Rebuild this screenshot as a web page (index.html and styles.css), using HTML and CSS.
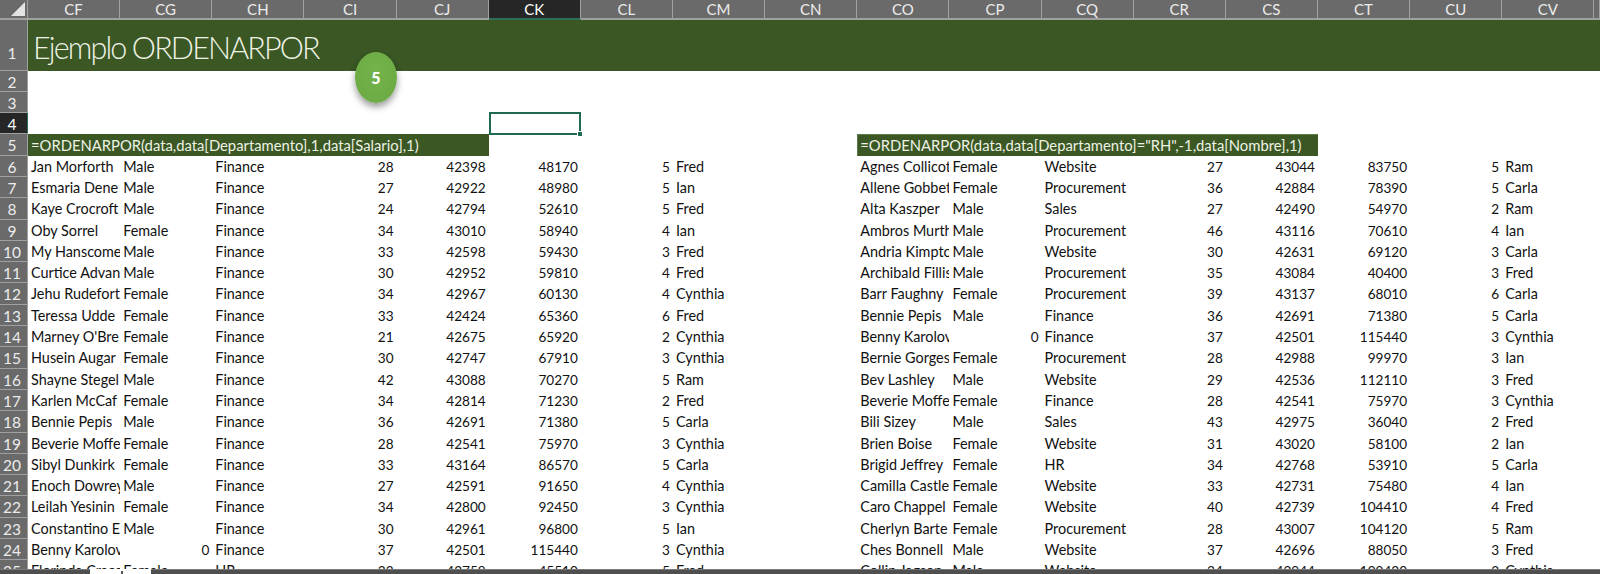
FILE: index.html
```html
<!DOCTYPE html>
<html lang="es">
<head>
    <meta charset="UTF-8">
    <meta name="viewport" content="width=device-width, initial-scale=1.0">
    <title>Ejemplo ORDENARPOR</title>
    <link rel="stylesheet" href="styles.css">
</head>
<body>
    <div class="window">
        <div class="sheet">
            <div class="row head-row">
                <span class="corner"><i class="corner-mark"></i></span>
                <span class="ch">CF</span><span class="ch">CG</span><span class="ch">CH</span><span class="ch">CI</span><span class="ch">CJ</span><span class="ch selected">CK</span><span class="ch">CL</span><span class="ch">CM</span><span class="ch">CN</span><span class="ch">CO</span><span class="ch">CP</span><span class="ch">CQ</span><span class="ch">CR</span><span class="ch">CS</span><span class="ch">CT</span><span class="ch">CU</span><span class="ch">CV</span><span class="ch"></span>
            </div>

            <div class="row title-row">
                <span class="rh">1</span>
                <div class="title">Ejemplo ORDENARPOR</div>
            </div>
            <div class="row"><span class="rh">2</span></div>
            <div class="row"><span class="rh">3</span></div>
            <div class="row">
                <span class="rh selected">4</span>
                <span class="c"></span><span class="c"></span><span class="c"></span><span class="c"></span><span class="c"></span>
                <span class="c active"><i class="handle"></i></span>
            </div>
            <div class="row">
                <span class="rh">5</span>
                <div class="formula left-formula">=ORDENARPOR(data,data[Departamento],1,data[Salario],1)</div>
                <div class="formula right-formula">=ORDENARPOR(data,data[Departamento]="RH",-1,data[Nombre],1)</div>
            </div>

            <div class="row"><span class="rh">6</span><span class="c">Jan Morforth</span><span class="c">Male</span><span class="c">Finance</span><span class="c n">28</span><span class="c n">42398</span><span class="c n">48170</span><span class="c n">5</span><span class="c">Fred</span><span class="c"></span><span class="c">Agnes Collicott</span><span class="c">Female</span><span class="c">Website</span><span class="c n">27</span><span class="c n">43044</span><span class="c n">83750</span><span class="c n">5</span><span class="c">Ram</span></div>
            <div class="row"><span class="rh">7</span><span class="c">Esmaria Dene</span><span class="c">Male</span><span class="c">Finance</span><span class="c n">27</span><span class="c n">42922</span><span class="c n">48980</span><span class="c n">5</span><span class="c">Ian</span><span class="c"></span><span class="c">Allene Gobbet</span><span class="c">Female</span><span class="c">Procurement</span><span class="c n">36</span><span class="c n">42884</span><span class="c n">78390</span><span class="c n">5</span><span class="c">Carla</span></div>
            <div class="row"><span class="rh">8</span><span class="c">Kaye Crocroft</span><span class="c">Male</span><span class="c">Finance</span><span class="c n">24</span><span class="c n">42794</span><span class="c n">52610</span><span class="c n">5</span><span class="c">Fred</span><span class="c"></span><span class="c">Alta Kaszper</span><span class="c">Male</span><span class="c">Sales</span><span class="c n">27</span><span class="c n">42490</span><span class="c n">54970</span><span class="c n">2</span><span class="c">Ram</span></div>
            <div class="row"><span class="rh">9</span><span class="c">Oby Sorrel</span><span class="c">Female</span><span class="c">Finance</span><span class="c n">34</span><span class="c n">43010</span><span class="c n">58940</span><span class="c n">4</span><span class="c">Ian</span><span class="c"></span><span class="c">Ambros Murth</span><span class="c">Male</span><span class="c">Procurement</span><span class="c n">46</span><span class="c n">43116</span><span class="c n">70610</span><span class="c n">4</span><span class="c">Ian</span></div>
            <div class="row"><span class="rh">10</span><span class="c">My Hanscome</span><span class="c">Male</span><span class="c">Finance</span><span class="c n">33</span><span class="c n">42598</span><span class="c n">59430</span><span class="c n">3</span><span class="c">Fred</span><span class="c"></span><span class="c">Andria Kimpto</span><span class="c">Male</span><span class="c">Website</span><span class="c n">30</span><span class="c n">42631</span><span class="c n">69120</span><span class="c n">3</span><span class="c">Carla</span></div>
            <div class="row"><span class="rh">11</span><span class="c">Curtice Advan</span><span class="c">Male</span><span class="c">Finance</span><span class="c n">30</span><span class="c n">42952</span><span class="c n">59810</span><span class="c n">4</span><span class="c">Fred</span><span class="c"></span><span class="c">Archibald Fillis</span><span class="c">Male</span><span class="c">Procurement</span><span class="c n">35</span><span class="c n">43084</span><span class="c n">40400</span><span class="c n">3</span><span class="c">Fred</span></div>
            <div class="row"><span class="rh">12</span><span class="c">Jehu Rudefort</span><span class="c">Female</span><span class="c">Finance</span><span class="c n">34</span><span class="c n">42967</span><span class="c n">60130</span><span class="c n">4</span><span class="c">Cynthia</span><span class="c"></span><span class="c">Barr Faughny</span><span class="c">Female</span><span class="c">Procurement</span><span class="c n">39</span><span class="c n">43137</span><span class="c n">68010</span><span class="c n">6</span><span class="c">Carla</span></div>
            <div class="row"><span class="rh">13</span><span class="c">Teressa Udde</span><span class="c">Female</span><span class="c">Finance</span><span class="c n">33</span><span class="c n">42424</span><span class="c n">65360</span><span class="c n">6</span><span class="c">Fred</span><span class="c"></span><span class="c">Bennie Pepis</span><span class="c">Male</span><span class="c">Finance</span><span class="c n">36</span><span class="c n">42691</span><span class="c n">71380</span><span class="c n">5</span><span class="c">Carla</span></div>
            <div class="row"><span class="rh">14</span><span class="c">Marney O'Bre</span><span class="c">Female</span><span class="c">Finance</span><span class="c n">21</span><span class="c n">42675</span><span class="c n">65920</span><span class="c n">2</span><span class="c">Cynthia</span><span class="c"></span><span class="c">Benny Karolov</span><span class="c n">0</span><span class="c">Finance</span><span class="c n">37</span><span class="c n">42501</span><span class="c n">115440</span><span class="c n">3</span><span class="c">Cynthia</span></div>
            <div class="row"><span class="rh">15</span><span class="c">Husein Augar</span><span class="c">Female</span><span class="c">Finance</span><span class="c n">30</span><span class="c n">42747</span><span class="c n">67910</span><span class="c n">3</span><span class="c">Cynthia</span><span class="c"></span><span class="c">Bernie Gorges</span><span class="c">Female</span><span class="c">Procurement</span><span class="c n">28</span><span class="c n">42988</span><span class="c n">99970</span><span class="c n">3</span><span class="c">Ian</span></div>
            <div class="row"><span class="rh">16</span><span class="c">Shayne Stegel</span><span class="c">Male</span><span class="c">Finance</span><span class="c n">42</span><span class="c n">43088</span><span class="c n">70270</span><span class="c n">5</span><span class="c">Ram</span><span class="c"></span><span class="c">Bev Lashley</span><span class="c">Male</span><span class="c">Website</span><span class="c n">29</span><span class="c n">42536</span><span class="c n">112110</span><span class="c n">3</span><span class="c">Fred</span></div>
            <div class="row"><span class="rh">17</span><span class="c">Karlen McCaf</span><span class="c">Female</span><span class="c">Finance</span><span class="c n">34</span><span class="c n">42814</span><span class="c n">71230</span><span class="c n">2</span><span class="c">Fred</span><span class="c"></span><span class="c">Beverie Moffe</span><span class="c">Female</span><span class="c">Finance</span><span class="c n">28</span><span class="c n">42541</span><span class="c n">75970</span><span class="c n">3</span><span class="c">Cynthia</span></div>
            <div class="row"><span class="rh">18</span><span class="c">Bennie Pepis</span><span class="c">Male</span><span class="c">Finance</span><span class="c n">36</span><span class="c n">42691</span><span class="c n">71380</span><span class="c n">5</span><span class="c">Carla</span><span class="c"></span><span class="c">Bili Sizey</span><span class="c">Male</span><span class="c">Sales</span><span class="c n">43</span><span class="c n">42975</span><span class="c n">36040</span><span class="c n">2</span><span class="c">Fred</span></div>
            <div class="row"><span class="rh">19</span><span class="c">Beverie Moffe</span><span class="c">Female</span><span class="c">Finance</span><span class="c n">28</span><span class="c n">42541</span><span class="c n">75970</span><span class="c n">3</span><span class="c">Cynthia</span><span class="c"></span><span class="c">Brien Boise</span><span class="c">Female</span><span class="c">Website</span><span class="c n">31</span><span class="c n">43020</span><span class="c n">58100</span><span class="c n">2</span><span class="c">Ian</span></div>
            <div class="row"><span class="rh">20</span><span class="c">Sibyl Dunkirk</span><span class="c">Female</span><span class="c">Finance</span><span class="c n">33</span><span class="c n">43164</span><span class="c n">86570</span><span class="c n">5</span><span class="c">Carla</span><span class="c"></span><span class="c">Brigid Jeffrey</span><span class="c">Female</span><span class="c">HR</span><span class="c n">34</span><span class="c n">42768</span><span class="c n">53910</span><span class="c n">5</span><span class="c">Carla</span></div>
            <div class="row"><span class="rh">21</span><span class="c">Enoch Dowrey</span><span class="c">Male</span><span class="c">Finance</span><span class="c n">27</span><span class="c n">42591</span><span class="c n">91650</span><span class="c n">4</span><span class="c">Cynthia</span><span class="c"></span><span class="c">Camilla Castle</span><span class="c">Female</span><span class="c">Website</span><span class="c n">33</span><span class="c n">42731</span><span class="c n">75480</span><span class="c n">4</span><span class="c">Ian</span></div>
            <div class="row"><span class="rh">22</span><span class="c">Leilah Yesinin</span><span class="c">Female</span><span class="c">Finance</span><span class="c n">34</span><span class="c n">42800</span><span class="c n">92450</span><span class="c n">3</span><span class="c">Cynthia</span><span class="c"></span><span class="c">Caro Chappel</span><span class="c">Female</span><span class="c">Website</span><span class="c n">40</span><span class="c n">42739</span><span class="c n">104410</span><span class="c n">4</span><span class="c">Fred</span></div>
            <div class="row"><span class="rh">23</span><span class="c">Constantino E</span><span class="c">Male</span><span class="c">Finance</span><span class="c n">30</span><span class="c n">42961</span><span class="c n">96800</span><span class="c n">5</span><span class="c">Ian</span><span class="c"></span><span class="c">Cherlyn Barte</span><span class="c">Female</span><span class="c">Procurement</span><span class="c n">28</span><span class="c n">43007</span><span class="c n">104120</span><span class="c n">5</span><span class="c">Ram</span></div>
            <div class="row"><span class="rh">24</span><span class="c">Benny Karolov</span><span class="c n">0</span><span class="c">Finance</span><span class="c n">37</span><span class="c n">42501</span><span class="c n">115440</span><span class="c n">3</span><span class="c">Cynthia</span><span class="c"></span><span class="c">Ches Bonnell</span><span class="c">Male</span><span class="c">Website</span><span class="c n">37</span><span class="c n">42696</span><span class="c n">88050</span><span class="c n">3</span><span class="c">Fred</span></div>
            <div class="row"><span class="rh">25</span><span class="c">Florinda Crace</span><span class="c">Female</span><span class="c">HR</span><span class="c n">32</span><span class="c n">42758</span><span class="c n">45510</span><span class="c n">5</span><span class="c">Fred</span><span class="c"></span><span class="c">Collin Jagson</span><span class="c">Male</span><span class="c">Website</span><span class="c n">34</span><span class="c n">42944</span><span class="c n">100420</span><span class="c n">2</span><span class="c">Cynthia</span></div>

            <div class="badge">5</div>
        </div>
        <div class="tabs-bar"><div class="tab"><i class="tab-mark"></i></div></div>
    </div>
</body>
</html>
```

FILE: styles.css
```css
html, body {
    margin: 0;
    height: 100%;
    background: #fff;
}

.window {
    display: flex;
    flex-direction: column;
    height: 574px;
    overflow: hidden;
    font-family: "Lato", "Liberation Sans", sans-serif;
    font-size: 14.4px;
    color: #111;
}

.sheet {
    position: relative;
    flex: 1;
    min-height: 0;
    overflow: hidden;
}

.row {
    display: grid;
    grid-template-columns: 28px repeat(17, 92.15px) 1fr;
    grid-template-rows: minmax(0, 1fr);
    height: 21.3px;
    line-height: 22px;
}

.head-row {
    height: 19.5px;
    line-height: 18px;
}

.title-row {
    height: 51px;
}

.corner {
    position: relative;
    background: #6a6a6a;
    border-right: 1px solid #a0a0a0;
    border-bottom: 2px solid #a0a0a0;
    box-sizing: border-box;
}

.corner-mark {
    position: absolute;
    right: 2px;
    bottom: 2px;
    width: 0;
    height: 0;
    border-left: 14px solid transparent;
    border-bottom: 14px solid #e4e4e4;
}

.ch {
    background: #6a6a6a;
    color: #ececec;
    font-size: 15px;
    text-align: center;
    border-right: 1px solid #a0a0a0;
    border-bottom: 2px solid #a0a0a0;
    box-sizing: border-box;
}

.ch.selected {
    background: #262626;
    color: #fff;
    border-bottom-color: #2f6f57;
}

.rh {
    background: #6a6a6a;
    color: #ececec;
    text-align: center;
    border-right: 1px solid #a0a0a0;
    border-bottom: 1px solid #a0a0a0;
    box-sizing: border-box;
    padding-right: 3px;
    font-size: 15.5px;
    overflow: hidden;
}

.rh.selected {
    background: #262626;
    color: #fff;
    border-right-color: #2f6f57;
}

.title-row .rh {
    line-height: 66px;
}

.title {
    grid-column: 2 / -1;
    background: #3a5724;
    color: #eef2e4;
    font-size: 30.5px;
    font-weight: 300;
    letter-spacing: -1.85px;
    line-height: 55px;
    padding-left: 5px;
    white-space: nowrap;
    overflow: hidden;
}

.c {
    display: block;
    padding: 0 3px;
    overflow: hidden;
    white-space: nowrap;
    min-width: 0;
}

.c.n {
    font-size: 13.6px;
    text-align: right;
}

.c.active {
    position: relative;
    box-sizing: border-box;
    height: 23px;
    margin-top: -1px;
    border: 2px solid #1f6a50;
    overflow: visible;
    z-index: 2;
}

.handle {
    position: absolute;
    right: -4px;
    bottom: -4px;
    width: 6px;
    height: 6px;
    background: #1f6a50;
    border: 1px solid #fff;
    box-sizing: border-box;
}

.formula {
    background: #3a5724;
    color: #eef2e4;
    font-size: 14.8px;
    padding: 0 3px;
    white-space: nowrap;
    overflow: hidden;
}

.left-formula {
    grid-column: 2 / span 5;
}

.right-formula {
    grid-column: 11 / span 5;
    border-top: 1px solid #5d7a47;
    border-left: 1px solid #5d7a47;
    box-sizing: border-box;
    padding-left: 2px;
    line-height: 20px;
}

.badge {
    position: absolute;
    left: 355px;
    top: 52px;
    width: 42px;
    height: 51px;
    border-radius: 50%;
    background: radial-gradient(ellipse at 50% 40%, #74b34a 0%, #6dab45 70%, #62a03c 100%);
    box-shadow: 0 4px 7px rgba(0, 0, 0, 0.4);
    color: #fff;
    font-weight: 900;
    font-size: 16px;
    line-height: 52px;
    text-align: center;
}

.tabs-bar {
    position: relative;
    flex: 0 0 5px;
    background: #4f4f4f;
    border-top: 1px solid #7a7a7a;
    box-sizing: border-box;
}

.tab {
    position: absolute;
    left: 90px;
    top: -1px;
    width: 61px;
    height: 5px;
    background: #fff;
}

.tab-mark {
    position: absolute;
    left: 31px;
    top: 2px;
    width: 2px;
    height: 3px;
    background: #555;
}
```
